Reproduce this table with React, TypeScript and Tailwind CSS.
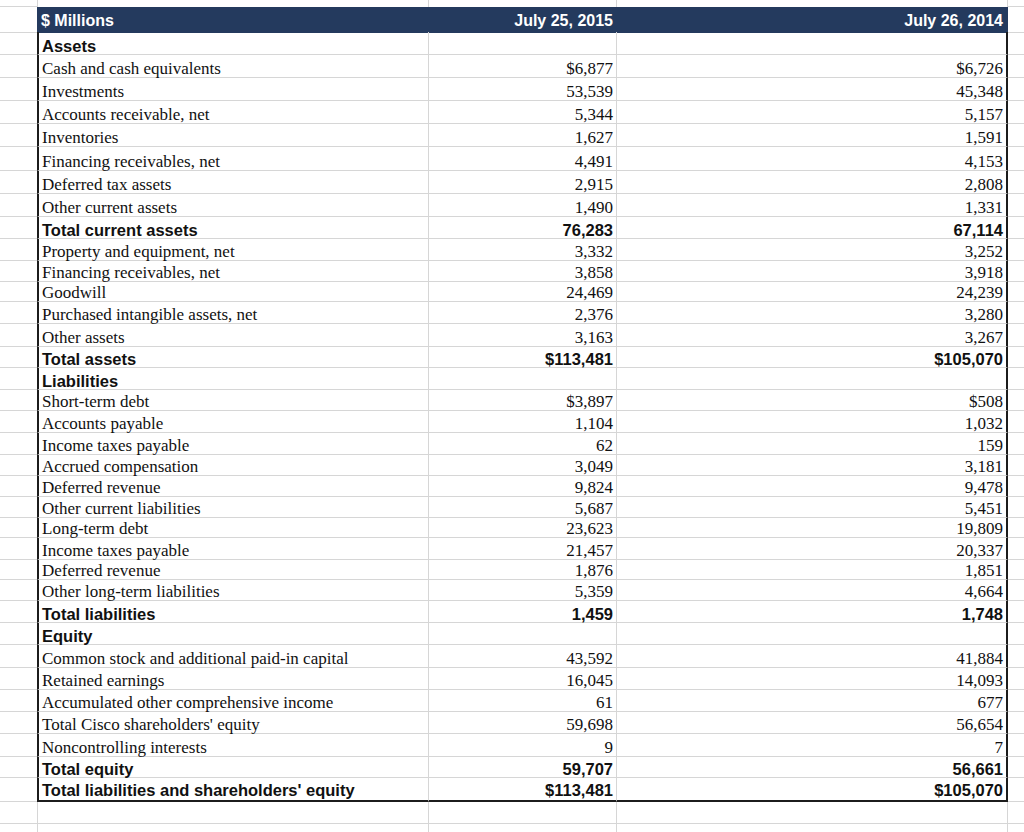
type Row = {
  label: string;
  a?: string;
  b?: string;
  bold?: boolean;
  h: string;
};

const rows: Row[] = [
  { label: "Assets", bold: true, h: "h-[23px]" },
  { label: "Cash and cash equivalents", a: "$6,877", b: "$6,726", h: "h-[23px]" },
  { label: "Investments", a: "53,539", b: "45,348", h: "h-[23px]" },
  { label: "Accounts receivable, net", a: "5,344", b: "5,157", h: "h-[23px]" },
  { label: "Inventories", a: "1,627", b: "1,591", h: "h-[23px]" },
  { label: "Financing receivables, net", a: "4,491", b: "4,153", h: "h-[24px]" },
  { label: "Deferred tax assets", a: "2,915", b: "2,808", h: "h-[23px]" },
  { label: "Other current assets", a: "1,490", b: "1,331", h: "h-[23px]" },
  { label: "Total current assets", a: "76,283", b: "67,114", bold: true, h: "h-[22px]" },
  { label: "Property and equipment, net", a: "3,332", b: "3,252", h: "h-[22px]" },
  { label: "Financing receivables, net", a: "3,858", b: "3,918", h: "h-[21px]" },
  { label: "Goodwill", a: "24,469", b: "24,239", h: "h-[20px]" },
  { label: "Purchased intangible assets, net", a: "2,376", b: "3,280", h: "h-[22px]" },
  { label: "Other assets", a: "3,163", b: "3,267", h: "h-[23px]" },
  { label: "Total assets", a: "$113,481", b: "$105,070", bold: true, h: "h-[21px]" },
  { label: "Liabilities", bold: true, h: "h-[22px]" },
  { label: "Short-term debt", a: "$3,897", b: "$508", h: "h-[21px]" },
  { label: "Accounts payable", a: "1,104", b: "1,032", h: "h-[22px]" },
  { label: "Income taxes payable", a: "62", b: "159", h: "h-[22px]" },
  { label: "Accrued compensation", a: "3,049", b: "3,181", h: "h-[21px]" },
  { label: "Deferred revenue", a: "9,824", b: "9,478", h: "h-[21px]" },
  { label: "Other current liabilities", a: "5,687", b: "5,451", h: "h-[21px]" },
  { label: "Long-term debt", a: "23,623", b: "19,809", h: "h-[20px]" },
  { label: "Income taxes payable", a: "21,457", b: "20,337", h: "h-[22px]" },
  { label: "Deferred revenue", a: "1,876", b: "1,851", h: "h-[20px]" },
  { label: "Other long-term liabilities", a: "5,359", b: "4,664", h: "h-[21px]" },
  { label: "Total liabilities", a: "1,459", b: "1,748", bold: true, h: "h-[22px]" },
  { label: "Equity", bold: true, h: "h-[22px]" },
  { label: "Common stock and additional paid-in capital", a: "43,592", b: "41,884", h: "h-[23px]" },
  { label: "Retained earnings", a: "16,045", b: "14,093", h: "h-[22px]" },
  { label: "Accumulated other comprehensive income", a: "61", b: "677", h: "h-[22px]" },
  { label: "Total Cisco shareholders' equity", a: "59,698", b: "56,654", h: "h-[22px]" },
  { label: "Noncontrolling interests", a: "9", b: "7", h: "h-[23px]" },
  { label: "Total equity", a: "59,707", b: "56,661", bold: true, h: "h-[21px]" },
  { label: "Total liabilities and shareholders' equity", a: "$113,481", b: "$105,070", bold: true, h: "h-[24px]" },
];

const cols = "grid grid-cols-[37px_392px_188px_391px_1fr]";
const serif = "font-['Liberation_Serif',_'Times_New_Roman',serif] text-[17px]";
const sans = "font-['Liberation_Sans',Arial,sans-serif] text-[16.5px] font-bold";
const head = "font-['Liberation_Sans',Arial,sans-serif] text-[16px] font-bold";

function DataRow({ row, last }: { row: Row; last: boolean }) {
  const font = row.bold ? sans : serif;
  // last row closes the table with the dark rule
  const bottom = last ? "border-b-2 border-b-[#1c1c1c] pb-[2px]" : "border-b border-b-[#d6d6d6]";
  return (
    <div className={`${cols} ${row.h}`}>
      <div className="border-b border-[#d6d6d6]" />
      <div
        className={`flex items-end whitespace-nowrap border-l-2 border-r border-l-[#1c1c1c] border-r-[#d6d6d6] pl-[3px] leading-[16px] text-[#111] ${bottom} ${font}`}
      >
        {row.label}
      </div>
      <div
        className={`flex items-end justify-end whitespace-nowrap border-r border-r-[#d6d6d6] pr-[3px] leading-[16px] text-[#111] ${bottom} ${font}`}
      >
        {row.a}
      </div>
      <div
        className={`flex items-end justify-end whitespace-nowrap border-r-2 border-r-[#1c1c1c] pr-[3px] leading-[16px] text-[#111] ${bottom} ${font}`}
      >
        {row.b}
      </div>
      <div className="border-b border-[#d6d6d6]" />
    </div>
  );
}

function EmptyRow({ h }: { h: string }) {
  return (
    <div className={`${cols} ${h}`}>
      <div className="border-b border-[#d6d6d6]" />
      <div className="border-b border-l border-r border-[#d6d6d6]" />
      <div className="border-b border-r border-[#d6d6d6]" />
      <div className="border-b border-r border-[#d6d6d6]" />
      <div className="border-b border-[#d6d6d6]" />
    </div>
  );
}

export default function App() {
  return (
    <div className="h-[832px] w-[1024px] overflow-hidden bg-white">
      <div className={`${cols} h-[7px]`}>
        <div className="border-b border-[#d6d6d6]" />
        <div className="border-l border-r border-[#d6d6d6]" />
        <div className="border-r border-[#d6d6d6]" />
        <div className="border-r border-[#d6d6d6]" />
        <div className="border-b border-[#d6d6d6]" />
      </div>
      <div className={`${cols} h-[25px]`}>
        <div className="border-b border-[#d6d6d6]" />
        <div className={`flex items-center bg-[#243a5e] pl-[4px] pt-[2px] text-white ${head}`}>$ Millions</div>
        <div className={`flex items-center justify-end bg-[#243a5e] pr-[4px] pt-[2px] text-white ${head}`}>
          July 25, 2015
        </div>
        <div className={`flex items-center justify-end bg-[#243a5e] pr-[5px] pt-[2px] text-white ${head}`}>
          July 26, 2014
        </div>
        <div className="border-b border-[#d6d6d6]" />
      </div>
      {rows.map((row, i) => (
        <DataRow key={i} row={row} last={i === rows.length - 1} />
      ))}
      <EmptyRow h="h-[22px]" />
      <EmptyRow h="h-[22px]" />
    </div>
  );
}
